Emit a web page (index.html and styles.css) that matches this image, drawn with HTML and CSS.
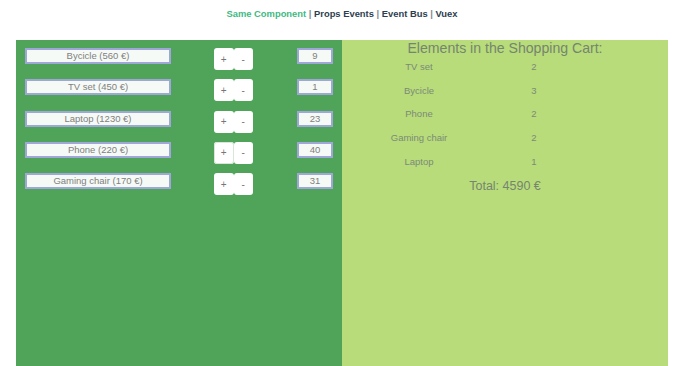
FILE: index.html
```html
<!DOCTYPE html>
<html>
<head>
<meta charset="utf-8">
<link rel="stylesheet" href="styles.css">
</head>
<body>
<div class="app">
  <nav class="nav">
    <a class="nav-link active">Same Component</a><span class="sep"> | </span><a class="nav-link">Props Events</a><span class="sep"> | </span><a class="nav-link">Event Bus</a><span class="sep"> | </span><a class="nav-link">Vuex</a>
  </nav>
  <div class="panels">
    <div class="shop">
      <div class="row">
        <div class="name">Bycicle (560 €)</div>
        <div class="btns"><button class="btn">+</button><button class="btn">-</button></div>
        <div class="count">9</div>
      </div>
      <div class="row">
        <div class="name">TV set (450 €)</div>
        <div class="btns"><button class="btn">+</button><button class="btn">-</button></div>
        <div class="count">1</div>
      </div>
      <div class="row">
        <div class="name">Laptop (1230 €)</div>
        <div class="btns"><button class="btn">+</button><button class="btn">-</button></div>
        <div class="count">23</div>
      </div>
      <div class="row">
        <div class="name">Phone (220 €)</div>
        <div class="btns"><button class="btn focus">+</button><button class="btn">-</button></div>
        <div class="count">40</div>
      </div>
      <div class="row">
        <div class="name">Gaming chair (170 €)</div>
        <div class="btns"><button class="btn">+</button><button class="btn">-</button></div>
        <div class="count">31</div>
      </div>
    </div>
    <div class="cart">
      <h2 class="cart-title">Elements in the Shopping Cart:</h2>
      <div class="cart-table">
        <div class="cell">TV set</div><div class="cell">2</div>
        <div class="cell">Bycicle</div><div class="cell">3</div>
        <div class="cell">Phone</div><div class="cell">2</div>
        <div class="cell">Gaming chair</div><div class="cell">2</div>
        <div class="cell">Laptop</div><div class="cell">1</div>
      </div>
      <div class="total">Total: 4590 €</div>
    </div>
  </div>
</div>
</body>
</html>
```
FILE: styles.css
```css
html, body {
  margin: 0;
  padding: 0;
  background: #ffffff;
}
.app {
  font-family: "Liberation Sans", Arial, sans-serif;
  width: 652px;
  margin-left: 16px;
  height: 366px;
  overflow: hidden;
}
.nav {
  height: 40px;
  box-sizing: border-box;
  padding-top: 8px;
  text-align: center;
  font-size: 9.4px;
  font-weight: bold;
  color: #2c3e50;
  line-height: 12px;
}
.nav-link {
  color: #2c3e50;
}
.nav-link.active {
  color: #42b983;
}
.sep {
  color: #7f8a94;
}
.panels {
  display: flex;
  height: 326px;
}
.shop {
  width: 326px;
  background: #4fa45a;
  padding: 8px 0 0 9px;
  box-sizing: border-box;
  display: flex;
  flex-direction: column;
  gap: 9.3px;
}
.row {
  display: flex;
  align-items: flex-start;
  height: 22px;
}
.name {
  width: 146px;
  height: 16px;
  box-sizing: border-box;
  border: 2px solid #9ea7d8;
  background: #f6faf6;
  color: #808080;
  font-size: 9.5px;
  line-height: 12px;
  text-align: center;
}
.btns {
  display: flex;
  margin-left: 43px;
}
.btn {
  width: 19.5px;
  height: 22px;
  border: none;
  background: #ffffff;
  border-radius: 3px;
  padding: 0;
  font-family: "Liberation Sans", Arial, sans-serif;
  font-size: 10px;
  color: #777777;
}
.btn.focus {
  box-shadow: inset 0 0 0 1px #d9e6d9;
}
.count {
  margin-left: 44px;
  width: 36px;
  height: 16px;
  box-sizing: border-box;
  border: 2px solid #9ea7d8;
  background: #f6faf6;
  color: #808080;
  font-size: 9.5px;
  line-height: 12px;
  text-align: center;
}
.cart {
  width: 326px;
  background: #b8dc7a;
  color: #7c8a78;
}
.cart-title {
  margin: 0;
  font-weight: normal;
  font-size: 14.1px;
  line-height: 16px;
  text-align: center;
  padding-top: 0;
  color: #75856f;
}
.cart-table {
  display: grid;
  grid-template-columns: 100px 100px;
  column-gap: 15px;
  margin-left: 27px;
  margin-top: 5px;
  row-gap: 11.7px;
}
.cell {
  font-size: 9.5px;
  line-height: 12px;
  text-align: center;
}
.total {
  text-align: center;
  font-size: 12.5px;
  margin-top: 11px;
  color: #75856f;
}
```
